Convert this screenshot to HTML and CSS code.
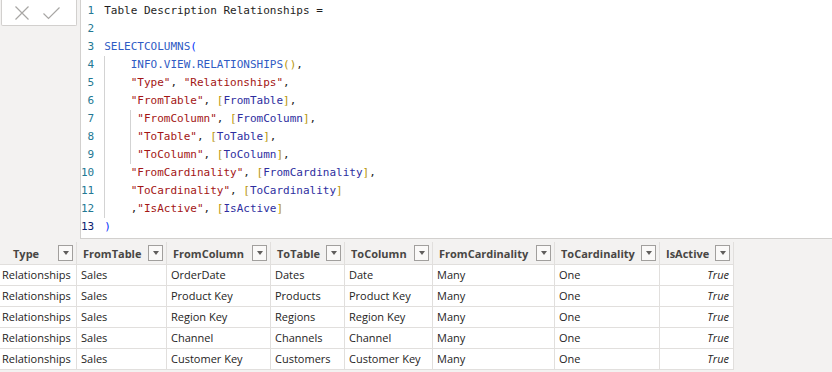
FILE: index.html
```html
<!DOCTYPE html>
<html>
<head>
<meta charset="utf-8">
<link rel="stylesheet" href="styles.css">
</head>
<body>
<div class="top">
  <div class="side">
    <div class="actions">
      <svg width="74" height="26" viewBox="0 0 74 26">
        <path d="M13.5 6.5 L26.5 19.5 M26.5 6.5 L13.5 19.5" stroke="#a8a6a4" stroke-width="1.2" fill="none"/>
        <path d="M41.5 13.5 L46.5 18.5 L57.5 7.5" stroke="#a8a6a4" stroke-width="1.2" fill="none"/>
      </svg>
    </div>
  </div>
  <div class="editor">
    <div class="guide g1"></div>
    <div class="guide g2"></div>
    <div class="line"><span class="num">1</span><span class="code">Table Description Relationships =</span></div>
    <div class="line"><span class="num">2</span><span class="code"></span></div>
    <div class="line"><span class="num">3</span><span class="code"><span class="fn">SELECTCOLUMNS</span><span class="b1">(</span></span></div>
    <div class="line"><span class="num">4</span><span class="code">    <span class="fn">INFO.VIEW.RELATIONSHIPS</span><span class="b2">()</span>,</span></div>
    <div class="line"><span class="num">5</span><span class="code">    <span class="str">"Type"</span>, <span class="str">"Relationships"</span>,</span></div>
    <div class="line"><span class="num">6</span><span class="code">    <span class="str">"FromTable"</span>, <span class="b2">[</span><span class="col">FromTable</span><span class="b2">]</span>,</span></div>
    <div class="line"><span class="num">7</span><span class="code">     <span class="str">"FromColumn"</span>, <span class="b2">[</span><span class="col">FromColumn</span><span class="b2">]</span>,</span></div>
    <div class="line"><span class="num">8</span><span class="code">     <span class="str">"ToTable"</span>, <span class="b2">[</span><span class="col">ToTable</span><span class="b2">]</span>,</span></div>
    <div class="line"><span class="num">9</span><span class="code">     <span class="str">"ToColumn"</span>, <span class="b2">[</span><span class="col">ToColumn</span><span class="b2">]</span>,</span></div>
    <div class="line"><span class="num">10</span><span class="code">    <span class="str">"FromCardinality"</span>, <span class="b2">[</span><span class="col">FromCardinality</span><span class="b2">]</span>,</span></div>
    <div class="line"><span class="num">11</span><span class="code">    <span class="str">"ToCardinality"</span>, <span class="b2">[</span><span class="col">ToCardinality</span><span class="b2">]</span></span></div>
    <div class="line"><span class="num">12</span><span class="code">    ,<span class="str">"IsActive"</span>, <span class="b2">[</span><span class="col">IsActive</span><span class="b2">]</span></span></div>
    <div class="line"><span class="num active">13</span><span class="code"><span class="b1">)</span></span></div>
  </div>
</div>

<div class="grid">
  <div class="th first"><span>Type</span><span class="dd"></span></div>
  <div class="th"><span>FromTable</span><span class="dd"></span></div>
  <div class="th"><span>FromColumn</span><span class="dd"></span></div>
  <div class="th"><span>ToTable</span><span class="dd"></span></div>
  <div class="th"><span>ToColumn</span><span class="dd"></span></div>
  <div class="th"><span>FromCardinality</span><span class="dd"></span></div>
  <div class="th"><span>ToCardinality</span><span class="dd"></span></div>
  <div class="th"><span>IsActive</span><span class="dd"></span></div>

  <div class="td first">Relationships</div><div class="td">Sales</div><div class="td">OrderDate</div><div class="td">Dates</div><div class="td">Date</div><div class="td">Many</div><div class="td">One</div><div class="td bool">True</div>
  <div class="td first">Relationships</div><div class="td">Sales</div><div class="td">Product Key</div><div class="td">Products</div><div class="td">Product Key</div><div class="td">Many</div><div class="td">One</div><div class="td bool">True</div>
  <div class="td first">Relationships</div><div class="td">Sales</div><div class="td">Region Key</div><div class="td">Regions</div><div class="td">Region Key</div><div class="td">Many</div><div class="td">One</div><div class="td bool">True</div>
  <div class="td first">Relationships</div><div class="td">Sales</div><div class="td">Channel</div><div class="td">Channels</div><div class="td">Channel</div><div class="td">Many</div><div class="td">One</div><div class="td bool">True</div>
  <div class="td first">Relationships</div><div class="td">Sales</div><div class="td">Customer Key</div><div class="td">Customers</div><div class="td">Customer Key</div><div class="td">Many</div><div class="td">One</div><div class="td bool">True</div>
</div>
</body>
</html>
```

FILE: styles.css
```css
* { box-sizing: border-box; }
html, body {
  margin: 0;
  padding: 0;
  background: #f3f2f1;
}
body {
  width: 832px;
  height: 372px;
  overflow: hidden;
}
.top {
  display: flex;
  height: 239px;
}
.side {
  width: 80px;
  flex: none;
}
.actions {
  margin-left: 1px;
  width: 76px;
  height: 27px;
  margin-top: -1px;
  padding-top: 1px;
  background: #fff;
  border: 1px solid #d2d0ce;
  border-top: none;
  border-radius: 0 0 2px 2px;
}
.actions svg { display: block; }
.editor {
  flex: 1;
  position: relative;
  background: #fff;
  border-left: 1px solid #d2d0ce;
  border-bottom: 1px solid #d2d0ce;
  padding-top: 2px;
  font-family: "DejaVu Sans Mono", monospace;
  font-size: 11px;
  color: #1e1e1e;
}
.line {
  display: flex;
  height: 18px;
  line-height: 18px;
}
.num {
  width: 2ch;
  flex: none;
  text-align: right;
  color: #237893;
}
.num.active { color: #0b216f; }
.code {
  margin-left: 10px;
  white-space: pre;
}
.fn { color: #2f5bc4; }
.str { color: #a31515; }
.col { color: #2e2ea0; }
.b1 { color: #0431fa; }
.b2 { color: #b8960c; }
.guide {
  position: absolute;
  width: 1px;
  background: #d3d3d3;
}
.g1 { left: 23px; top: 56px; height: 162px; }
.g2 { left: 49px; top: 110px; height: 54px; }

.grid {
  margin-top: 3px;
  display: grid;
  grid-template-columns: 77px 90px 104px 74px 88px 122px 105px 74px;
  width: 734px;
  font-family: "Open Sans", sans-serif;
  font-size: 11px;
  color: #252423;
}
.th {
  display: flex;
  align-items: center;
  height: 23px;
  padding-left: 6px;
  padding-right: 3px;
  border-right: 1px solid #e1dfdd;
  border-bottom: 1px solid #e1dfdd;
  font-weight: 700;
  color: #484644;
  white-space: nowrap;
}
.th.first { padding-left: 13px; }
.dd {
  margin-left: auto;
  width: 15px;
  height: 16px;
  border: 1px solid #a19f9d;
  background: #faf9f8;
  display: flex;
  justify-content: center;
  padding-top: 5px;
}
.dd::after {
  content: "";
  width: 0;
  height: 0;
  border-left: 3.5px solid transparent;
  border-right: 3.5px solid transparent;
  border-top: 4px solid #605e5c;
}
.td {
  height: 21px;
  line-height: 20px;
  padding-left: 4px;
  padding-right: 4px;
  background: #fff;
  border-right: 1px solid #e1dfdd;
  border-bottom: 1px solid #e1dfdd;
  white-space: nowrap;
  overflow: hidden;
}
.td.first { padding-left: 2px; }
.td.bool {
  text-align: right;
  font-style: italic;
}
```
